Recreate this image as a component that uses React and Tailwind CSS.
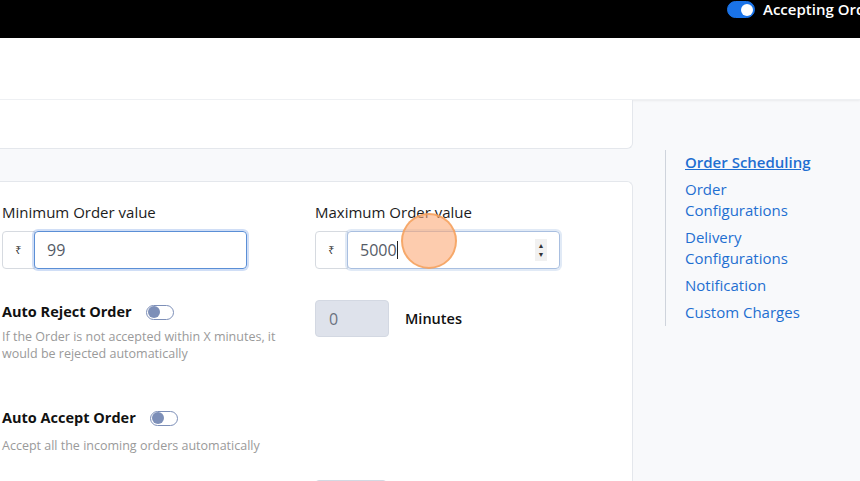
import React from 'react'

function Toggle({ on = false, className = '' }) {
    return (
        <span className={`inline-flex items-center rounded-full border ${on ? 'bg-[#1a73e8] border-[#1a73e8] justify-end' : 'bg-white border-[#7d8fb8] justify-start'} w-[28px] h-[15px] px-[1px] ${className}`}>
            <span className={`block rounded-full ${on ? 'bg-white' : 'bg-[#7d8fb8]'} w-[12px] h-[12px]`} />
        </span>
    )
}

export default function App() {
    const font = { fontFamily: '"Open Sans", "Noto Sans", Arial, sans-serif' }
    return (
        <div className="w-[860px] h-[481px] overflow-hidden bg-[#f8f9fb] flex flex-col" style={font}>
            <div className="h-[38px] bg-black shrink-0 flex items-start pl-[727px] pt-[1px] overflow-hidden">
                <div className="flex items-center gap-[8px] whitespace-nowrap">
                    <Toggle on className="w-[28px] h-[17px]" />
                    <span className="text-white text-[15px] font-semibold leading-[17px]">Accepting Orders</span>
                </div>
            </div>
            <div className="h-[62px] bg-white shrink-0 shadow-[0_1px_2px_rgba(0,0,0,0.06)] border-b border-[#eef0f3]" />

            <div className="flex flex-1 min-h-0">
                <div className="w-[653px] -ml-[20px] shrink-0 flex flex-col gap-[32px]">
                    <div className="h-[49px] shrink-0 bg-white border border-t-0 border-[#e4e7ec] rounded-br-[6px]" />
                    <div className="flex-1 shrink-0 bg-white border border-b-0 border-[#e4e7ec] rounded-tr-[6px] pl-[21px] pt-[20px]">
                        <div className="grid grid-cols-[313px_1fr]">
                            <div>
                                <div className="text-[15px] text-[#1c1c1c] leading-[20px]">Minimum Order value</div>
                                <div className="flex mt-[9px] h-[38px] w-[245px]">
                                    <div className="w-[33px] border border-[#d6dae0] rounded-l-[4px] flex items-center justify-center text-[11px] text-[#333]">₹</div>
                                    <div className="flex-1 border-[1.5px] border-[#5b8fd6] rounded-[4px] -ml-[1px] flex items-center pl-[12px] text-[16px] text-[#555b66] shadow-[0_0_0_2px_rgba(120,160,230,0.35)]">99</div>
                                </div>
                            </div>
                            <div>
                                <div className="text-[15px] text-[#1c1c1c] leading-[20px]">Maximum Order value</div>
                                <div className="flex mt-[9px] h-[38px] w-[245px] relative">
                                    <div className="w-[33px] border border-[#d6dae0] rounded-l-[4px] flex items-center justify-center text-[11px] text-[#333]">₹</div>
                                    <div className="flex-1 border-[1.5px] border-[#a9bfe0] rounded-[4px] -ml-[1px] flex items-center pl-[12px] pr-[12px] text-[16px] text-[#555b66] shadow-[0_0_0_2px_rgba(170,195,230,0.35)]">
                                        <span>5000</span>
                                        <span className="w-[1px] h-[18px] bg-[#222]" />
                                        <span className="ml-auto flex flex-col items-center justify-center bg-[#f1f1f1] w-[12px] h-[22px] text-[#333] text-[7px] leading-[9px]">
                                            <span>▲</span>
                                            <span>▼</span>
                                        </span>
                                    </div>
                                    <div className="absolute left-[86px] top-[-18px] w-[56px] h-[56px] rounded-full bg-[rgba(251,170,120,0.6)] border-2 border-[rgba(245,160,90,0.8)]" />
                                </div>
                            </div>
                        </div>

                        <div className="grid grid-cols-[313px_1fr] mt-[33px]">
                            <div>
                                <div className="flex items-center gap-[14px]">
                                    <span className="text-[14.5px] font-bold text-[#111] leading-[20px]">Auto Reject Order</span>
                                    <Toggle />
                                </div>
                                <div className="mt-[6px] text-[12.5px] leading-[17px] text-[#9a9a9a] w-[290px]">If the Order is not accepted within X minutes, it would be rejected automatically</div>
                            </div>
                            <div className="flex items-start gap-[16px]">
                                <div className="w-[74px] h-[37px] rounded-[4px] bg-[#dee2eb] border border-[#d3d8e2] flex items-center pl-[13px] text-[16px] text-[#6b7280] -mt-[2px]">0</div>
                                <span className="text-[14.5px] font-semibold text-[#111] mt-[6px]">Minutes</span>
                            </div>
                        </div>

                        <div className="mt-[46px]">
                            <div className="flex items-center gap-[14px]">
                                <span className="text-[14.5px] font-bold text-[#111] leading-[20px]">Auto Accept Order</span>
                                <Toggle />
                            </div>
                            <div className="mt-[9px] text-[12.5px] leading-[17px] text-[#9a9a9a]">Accept all the incoming orders automatically</div>
                        </div>

                        <div className="grid grid-cols-[313px_1fr] mt-[26px]">
                            <div className="text-[14.5px] font-bold text-[#111] leading-[20px] pt-[4px]">Auto Accept Scheduled Order</div>
                            <div className="w-[72px] h-[37px] rounded-[4px] bg-[#dee2eb] border border-[#d3d8e2]" />
                        </div>
                    </div>
                </div>

                <div className="flex-1 pl-[32px] pt-[52px]">
                    <div className="border-l border-[#cfd4dc] pl-[19px] h-[176px] -mt-[2px] pt-[2px] flex flex-col gap-[6px] text-[15px] leading-[21px] text-[#1f6fd1]">
                        <a className="font-semibold underline">Order Scheduling</a>
                        <a className="w-[120px]">Order Configurations</a>
                        <a className="w-[120px]">Delivery Configurations</a>
                        <a>Notification</a>
                        <a>Custom Charges</a>
                    </div>
                </div>
            </div>
        </div>
    )
}
